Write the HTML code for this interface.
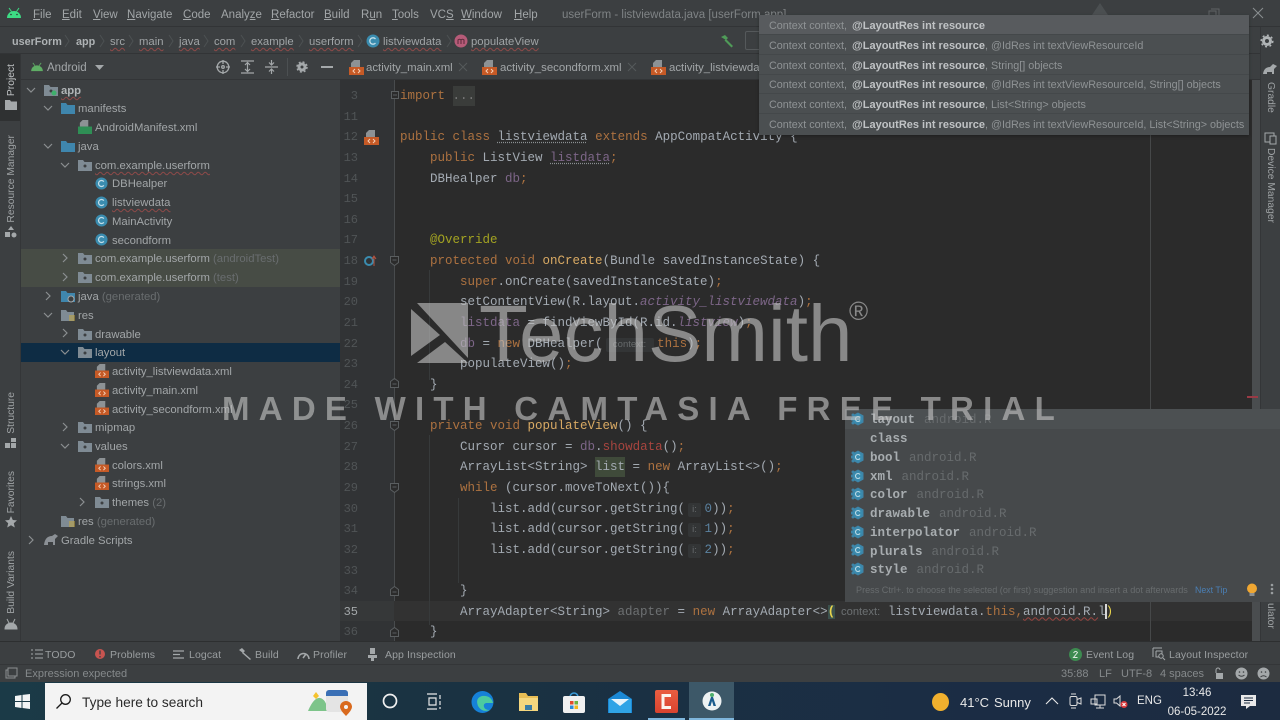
<!DOCTYPE html>
<html><head><meta charset="utf-8"><style>
html,body{margin:0;padding:0;width:1280px;height:720px;overflow:hidden;background:#3c3f41}
*{box-sizing:border-box}
body{position:relative;font-family:"Liberation Sans",sans-serif;font-size:11.5px;color:#a4a8aa}
.a{position:absolute}
.t{position:absolute;white-space:pre;line-height:16px;height:16px}
.m span{position:absolute;top:7px;white-space:pre;font-size:11.5px;line-height:16px;color:#a2a6a8}
.m u{text-underline-offset:1px}
.n span,.n b{position:absolute;top:34px;line-height:16px;white-space:pre;color:#a0a4a6;font-size:11.3px}
.n b{color:#aeb2b4;font-size:10.8px}
.wv{text-decoration:underline wavy #8f4a49 1px;text-underline-offset:2px}
.r{position:absolute;height:16px;line-height:16px;margin-top:1px;white-space:pre;font-size:11.3px;color:#a2a6a8}
.r i{font-style:normal;color:#696d6f}
.ln{position:absolute;left:335px;width:23px;text-align:right;font:12px/16px "Liberation Mono",monospace;color:#505456}
.c{position:absolute;white-space:pre;font:12.5px/16px "Liberation Mono",monospace;color:#a3aab2}
.k{color:#ad7240}.y{color:#d9aa64}.p{color:#7d6688}.g{color:#a3a322}.num{color:#5b82a0}
.h{display:inline-block;font:9.5px/14px "Liberation Sans",sans-serif;color:#666a6b;background:#333536;border-radius:2px;text-align:center;margin:0 3.5px 0 3px}
.v{position:absolute;writing-mode:vertical-rl;white-space:pre;font-size:10.3px;line-height:14px;color:#a0a4a6}
.vl{transform:rotate(180deg)}
.pr{position:absolute;left:0;width:490px;height:20px;line-height:20px;padding-top:1px;padding-left:10px;white-space:pre;font-size:10.8px;color:#8f9395;border-bottom:1px solid #44484a}
.pr b{color:#c0c3c5;font-weight:bold;font-size:11px;margin-left:5px}
.cr{position:absolute;left:25px;font:12.5px/16px "Liberation Mono",monospace;margin-top:1px;white-space:pre;color:#a8adb0;font-weight:bold}
.cr i{font-style:normal;font-weight:normal;color:#676b6d;margin-left:3px}
.b{position:absolute;top:647px;font-size:10.5px;line-height:16px;white-space:pre;color:#9a9ea0;letter-spacing:.1px}
.s{position:absolute;top:666px;font-size:11px;line-height:16px;white-space:pre;color:#85898b}
svg{position:absolute;overflow:visible}
</style></head><body>
<svg width="0" height="0" style="left:0;top:0"><defs>
<symbol id="fold" viewBox="0 0 14 12"><path d="M0 1h5l1.500 2H14v9H0z" fill="#7f8b94"/><circle cx="7" cy="7" r="1.500" fill="#3c3f41"/></symbol>
<symbol id="bfold" viewBox="0 0 14 12"><path d="M0 1h5l1.500 2H14v9H0z" fill="#3f86ad"/></symbol>
<symbol id="cl" viewBox="0 0 14 14"><circle cx="7" cy="7" r="6.500" fill="#3a8caf"/><path d="M9.500 5A3.200 3.200 0 1 0 9.500 9" fill="none" stroke="#c5dfe9" stroke-width="1.300"/></symbol>
<symbol id="xm" viewBox="0 0 15 15"><path d="M5 0h6v7H2V3z" fill="#8d9295"/><rect y="7" width="15" height="8" fill="#c65a26"/><path d="M6 9l-2 2 2 2M9 9l2 2-2 2" fill="none" stroke="#f3d0b8" stroke-width="1"/></symbol>
<symbol id="chd" viewBox="0 0 10 10"><path d="M1 3l4 4 4-4" fill="none" stroke="#8b8f91" stroke-width="1.200"/></symbol>
<symbol id="chr" viewBox="0 0 10 10"><path d="M3 1l4 4-4 4" fill="none" stroke="#8b8f91" stroke-width="1.200"/></symbol>
<symbol id="rc" viewBox="0 0 14 14"><path d="M7 .5L12.500 3.500v7L7 13.500 1.500 10.500v-7z" fill="#3d85a8"/><circle cx="7" cy="7" r="4.500" fill="#3a8caf"/><path d="M9 5.500A2.500 2.500 0 1 0 9 8.500" fill="none" stroke="#b9d8e4" stroke-width="1.100"/><circle cx="2" cy="3" r="1.500" fill="#3d85a8"/><circle cx="2" cy="11" r="1.500" fill="#3d85a8"/><circle cx="1" cy="7" r="1.500" fill="#3d85a8"/></symbol>
</defs></svg>

<!-- chrome backgrounds -->
<div class="a" style="left:0;top:0;width:1280px;height:27px;background:#3c3f41;border-bottom:1px solid #323436"></div>
<div class="a" style="left:0;top:27px;width:1280px;height:27px;background:#3c3f41;border-bottom:1px solid #323436"></div>
<div class="a" style="left:20px;top:54px;width:320px;height:588px;background:#3c3f41"></div>
<div class="a" style="left:20px;top:79px;width:320px;height:1px;background:#333537"></div>
<div class="a" style="left:0;top:54px;width:21px;height:588px;background:#3c3f41;border-right:1px solid #343638"></div>
<div class="a" style="left:0;top:54px;width:20px;height:67px;background:#2f3132"></div>
<div class="a" style="left:340px;top:54px;width:920px;height:26px;background:#3c3f41;border-bottom:1px solid #323436"></div>
<!-- editor -->
<div class="a" style="left:340px;top:80px;width:912px;height:562px;background:#2b2b2b"></div>
<div class="a" style="left:340px;top:80px;width:54px;height:562px;background:#313335"></div>
<div class="a" style="left:394px;top:80px;width:1px;height:562px;background:#484b4d"></div>
<div class="a" style="left:394px;top:601px;width:858px;height:20px;background:#323232"></div>
<div class="a" style="left:340px;top:601px;width:54px;height:20px;background:#363839"></div>
<div class="a" style="left:1150px;top:135px;width:1px;height:507px;background:#464849"></div>
<div class="a" style="left:1252px;top:80px;width:8px;height:562px;background:#4a4d4f"></div>
<div class="a" style="left:1247px;top:396px;width:11px;height:1.500px;background:#9a3a45"></div>
<div class="a" style="left:1260px;top:27px;width:20px;height:615px;background:#3c3f41;border-left:1px solid #343638"></div>
<div class="a" style="left:0;top:641px;width:1280px;height:1px;background:#2d2f30"></div>
<div class="a" style="left:0;top:642px;width:1280px;height:23px;background:#3c3f41;border-bottom:1px solid #343638"></div>
<div class="a" style="left:0;top:665px;width:1280px;height:17px;background:#3c3f41"></div>

<!-- menu -->
<svg style="left:6px;top:7px" width="16" height="12" viewBox="0 0 16 12"><path d="M1 11A7 7 0 0 1 15 11z" fill="#3ddc84"/><path d="M3 1l2.500 3.500M13 1l-2.500 3.500" stroke="#3ddc84" stroke-width="1"/><circle cx="5" cy="7.500" r=".8" fill="#2f3132"/><circle cx="11" cy="7.500" r=".8" fill="#2f3132"/></svg>
<div class="m">
<span style="left:33px"><u>F</u>ile</span><span style="left:62px"><u>E</u>dit</span><span style="left:93px"><u>V</u>iew</span><span style="left:127px"><u>N</u>avigate</span><span style="left:183px"><u>C</u>ode</span><span style="left:221px">Analy<u>z</u>e</span><span style="left:271px"><u>R</u>efactor</span><span style="left:324px"><u>B</u>uild</span><span style="left:361px">R<u>u</u>n</span><span style="left:392px"><u>T</u>ools</span><span style="left:430px">VC<u>S</u></span><span style="left:461px"><u>W</u>indow</span><span style="left:514px"><u>H</u>elp</span><span style="left:562px;color:#7f8385">userForm - listviewdata.java [userForm.app]</span>
</div>
<svg style="left:1208px;top:8px" width="12" height="10"><path d="M3 1h8v6M1 3h7v6H1z" fill="none" stroke="#5f6365"/></svg>
<svg style="left:1253px;top:8px" width="10" height="10"><path d="M0 0l10 10M10 0L0 10" stroke="#8b8f91" stroke-width="1"/></svg>

<!-- nav -->
<div class="n">
<b style="left:12px;font-weight:bold">userForm</b><b style="left:76px;font-weight:bold">app</b>
<span class="wv" style="left:110px">src</span><span class="wv" style="left:139px">main</span><span class="wv" style="left:179px">java</span><span class="wv" style="left:214px">com</span><span class="wv" style="left:251px">example</span><span class="wv" style="left:309px">userform</span><span class="wv" style="left:383px">listviewdata</span><span class="wv" style="left:471px">populateView</span>
</div>
<svg style="left:0;top:0" width="560" height="54" fill="none" stroke="#4d5153"><path d="M65 35l4 6-4 6M100 35l4 6-4 6M129 35l4 6-4 6M169 35l4 6-4 6M204 35l4 6-4 6M241 35l4 6-4 6M299 35l4 6-4 6M358 35l4 6-4 6M447 35l4 6-4 6"/></svg>
<svg style="left:366px;top:34px" width="14" height="14"><use href="#cl" width="14" height="14"/></svg>
<svg style="left:454px;top:34px" width="14" height="14"><circle cx="7" cy="7" r="6.500" fill="#b65b78"/><path d="M4 10V5.500M7 10V5.500M10 10V5.500M4 6q1.500-1.500 3 0q1.500-1.500 3 0" fill="none" stroke="#5a2a3a" stroke-width="1"/></svg>
<svg style="left:720px;top:34px" width="14" height="14"><path d="M1 3l4-2 3 3-2 2zM6 5l7 7-1.500 1.500-7-7z" fill="#4f9b58"/></svg>
<div class="a" style="left:745px;top:31px;width:20px;height:19px;border:1px solid #55595b;border-radius:2px"></div>
<svg style="left:1260px;top:34px" width="14" height="14"><circle cx="7" cy="7" r="3.500" fill="none" stroke="#b0b4b6" stroke-width="3"/><circle cx="7" cy="7" r="5.800" fill="none" stroke="#b0b4b6" stroke-width="1.500" stroke-dasharray="2 2.500"/></svg>

<!-- project panel header -->
<svg style="left:30px;top:62px" width="14" height="10" viewBox="0 0 16 12"><path d="M1 11A7 7 0 0 1 15 11z" fill="#5fad65"/><path d="M3 1l2.500 3.500M13 1l-2.500 3.500" stroke="#5fad65"/></svg>
<div class="t" style="left:47px;top:60px;font-size:11.5px">Android</div>
<svg style="left:95px;top:65px" width="9" height="5"><path d="M0 0h9L4.500 5z" fill="#a4a8aa"/></svg>
<svg style="left:216px;top:60px" width="14" height="14" fill="none" stroke="#a4a8aa" stroke-width="1.300"><circle cx="7" cy="7" r="5.800"/><circle cx="7" cy="7" r="1.300"/><path d="M7 0v4M7 10v4M0 7h4M10 7h4"/></svg>
<svg style="left:241px;top:60px" width="13" height="14" fill="none" stroke="#a4a8aa" stroke-width="1.200"><path d="M0 1h13M0 13h13M6.500 3v8M4 5l2.500-2.500L9 5M4 9l2.500 2.500L9 9"/></svg>
<svg style="left:265px;top:60px" width="13" height="14" fill="none" stroke="#a4a8aa" stroke-width="1.200"><path d="M0 7h13M6.500 0v5M6.500 14V9M4 2.500L6.500 5 9 2.500M4 11.500L6.500 9 9 11.500"/></svg>
<div class="a" style="left:287px;top:58px;width:1px;height:18px;background:#4c5052"></div>
<svg style="left:296px;top:61px" width="12" height="12"><circle cx="6" cy="6" r="3" fill="none" stroke="#a4a8aa" stroke-width="3"/><circle cx="6" cy="6" r="5" fill="none" stroke="#a4a8aa" stroke-width="1.500" stroke-dasharray="2 2"/></svg>
<div class="a" style="left:321px;top:66px;width:12px;height:1.500px;background:#a4a8aa"></div>

<!-- vertical labels left -->
<div class="v vl" style="left:5px;top:64px;color:#c0c3c5">Project</div>
<svg style="left:5px;top:100px" width="12" height="10"><path d="M0 0h5l1 1.500h6V10H0z" fill="#a4a8aa"/></svg>
<div class="v vl" style="left:5px;top:135px">Resource Manager</div>
<svg style="left:5px;top:226px" width="12" height="12"><path d="M6 0l3 4H3z M0 6h5v5H0z" fill="#a4a8aa"/><circle cx="9" cy="9" r="2.500" fill="#a4a8aa"/></svg>
<div class="v vl" style="left:5px;top:392px">Structure</div>
<svg style="left:5px;top:438px" width="12" height="10"><path d="M6 0h5v4H6zM0 5h5v5H0zM6 5h5v5H6z" fill="#a4a8aa"/></svg>
<div class="v vl" style="left:5px;top:471px">Favorites</div>
<svg style="left:5px;top:516px" width="12" height="12"><path d="M6 0l1.800 4 4.200.400-3.200 2.800 1 4.300L6 9.200 2.200 11.500l1-4.300L0 4.400 4.200 4z" fill="#a4a8aa"/></svg>
<div class="v vl" style="left:5px;top:551px">Build Variants</div>
<svg style="left:5px;top:619px" width="12" height="10"><path d="M0 10A6 6 0 0 1 12 10zM2 0l2 4M10 0L8 4" fill="#a4a8aa" stroke="#a4a8aa"/></svg>

<!-- tree highlights -->
<div class="a" style="left:21px;top:249px;width:319px;height:38px;background:#474c45"></div>
<div class="a" style="left:21px;top:343px;width:319px;height:19px;background:#0e2c44"></div>

<!-- tree -->
<svg style="left:26px;top:85px" width="10" height="10"><use href="#chd" width="10" height="10"/></svg>
<svg style="left:44px;top:84px" width="14" height="12"><use href="#fold" width="14" height="12"/></svg><svg style="left:51px;top:90px" width="6" height="6"><circle cx="3" cy="3" r="2.500" fill="#3fb06c"/></svg>
<div class="r" style="left:61px;top:82px;font-weight:bold;color:#b0b4b6"><span class="wv">app</span></div>
<svg style="left:43px;top:103px" width="10" height="10"><use href="#chd" width="10" height="10"/></svg>
<svg style="left:61px;top:102px" width="14" height="12"><use href="#bfold" width="14" height="12"/></svg>
<div class="r" style="left:78px;top:100px">manifests</div>
<svg style="left:78px;top:120px" width="14" height="14" viewBox="0 0 15 15"><path d="M5 0h6v7H2V3z" fill="#8d9295"/><rect y="7" width="15" height="8" fill="#2f8f55"/></svg>
<div class="r" style="left:95px;top:119px">AndroidManifest.xml</div>
<svg style="left:43px;top:141px" width="10" height="10"><use href="#chd" width="10" height="10"/></svg>
<svg style="left:61px;top:140px" width="14" height="12"><use href="#bfold" width="14" height="12"/></svg>
<div class="r" style="left:78px;top:138px">java</div>
<svg style="left:60px;top:160px" width="10" height="10"><use href="#chd" width="10" height="10"/></svg>
<svg style="left:78px;top:159px" width="14" height="12"><use href="#fold" width="14" height="12"/></svg>
<div class="r" style="left:95px;top:157px"><span class="wv">com.example.userform</span></div>
<svg style="left:95px;top:177px" width="13" height="13"><use href="#cl" width="13" height="13"/></svg>
<div class="r" style="left:112px;top:175px">DBHealper</div>
<svg style="left:95px;top:196px" width="13" height="13"><use href="#cl" width="13" height="13"/></svg>
<div class="r" style="left:112px;top:194px"><span class="wv">listviewdata</span></div>
<svg style="left:95px;top:214px" width="13" height="13"><use href="#cl" width="13" height="13"/></svg>
<div class="r" style="left:112px;top:213px">MainActivity</div>
<svg style="left:95px;top:233px" width="13" height="13"><use href="#cl" width="13" height="13"/></svg>
<div class="r" style="left:112px;top:232px">secondform</div>
<svg style="left:60px;top:253px" width="10" height="10"><use href="#chr" width="10" height="10"/></svg>
<svg style="left:78px;top:252px" width="14" height="12"><use href="#fold" width="14" height="12"/></svg>
<div class="r" style="left:95px;top:250px">com.example.userform <i>(androidTest)</i></div>
<svg style="left:60px;top:272px" width="10" height="10"><use href="#chr" width="10" height="10"/></svg>
<svg style="left:78px;top:271px" width="14" height="12"><use href="#fold" width="14" height="12"/></svg>
<div class="r" style="left:95px;top:269px">com.example.userform <i>(test)</i></div>
<svg style="left:43px;top:291px" width="10" height="10"><use href="#chr" width="10" height="10"/></svg>
<svg style="left:61px;top:290px" width="14" height="12"><use href="#bfold" width="14" height="12"/></svg><svg style="left:67px;top:295px" width="8" height="8"><circle cx="4" cy="4" r="3" fill="#3c3f41" stroke="#a4a8aa"/></svg>
<div class="r" style="left:78px;top:288px">java <i>(generated)</i></div>
<svg style="left:43px;top:310px" width="10" height="10"><use href="#chd" width="10" height="10"/></svg>
<svg style="left:61px;top:309px" width="14" height="12"><path d="M0 1h5l1.500 2H13v9H0z" fill="#7f8b94"/><path d="M8 7h6M8 9h6M8 11h6" stroke="#c9a93a"/></svg>
<div class="r" style="left:78px;top:307px">res</div>
<svg style="left:60px;top:328px" width="10" height="10"><use href="#chr" width="10" height="10"/></svg>
<svg style="left:78px;top:328px" width="14" height="12"><use href="#fold" width="14" height="12"/></svg>
<div class="r" style="left:95px;top:326px">drawable</div>
<svg style="left:60px;top:347px" width="10" height="10"><use href="#chd" width="10" height="10"/></svg>
<svg style="left:78px;top:346px" width="14" height="12"><use href="#fold" width="14" height="12"/></svg>
<div class="r" style="left:95px;top:344px">layout</div>
<svg style="left:95px;top:364px" width="14" height="14"><use href="#xm" width="14" height="14"/></svg>
<div class="r" style="left:112px;top:363px">activity_listviewdata.xml</div>
<svg style="left:95px;top:383px" width="14" height="14"><use href="#xm" width="14" height="14"/></svg>
<div class="r" style="left:112px;top:382px">activity_main.xml</div>
<svg style="left:95px;top:401px" width="14" height="14"><use href="#xm" width="14" height="14"/></svg>
<div class="r" style="left:112px;top:401px">activity_secondform.xml</div>
<svg style="left:60px;top:422px" width="10" height="10"><use href="#chr" width="10" height="10"/></svg>
<svg style="left:78px;top:421px" width="14" height="12"><use href="#fold" width="14" height="12"/></svg>
<div class="r" style="left:95px;top:419px">mipmap</div>
<svg style="left:60px;top:441px" width="10" height="10"><use href="#chd" width="10" height="10"/></svg>
<svg style="left:78px;top:440px" width="14" height="12"><use href="#fold" width="14" height="12"/></svg>
<div class="r" style="left:95px;top:438px">values</div>
<svg style="left:95px;top:458px" width="14" height="14"><use href="#xm" width="14" height="14"/></svg>
<div class="r" style="left:112px;top:457px">colors.xml</div>
<svg style="left:95px;top:476px" width="14" height="14"><use href="#xm" width="14" height="14"/></svg>
<div class="r" style="left:112px;top:475px">strings.xml</div>
<svg style="left:77px;top:497px" width="10" height="10"><use href="#chr" width="10" height="10"/></svg>
<svg style="left:95px;top:496px" width="14" height="12"><use href="#fold" width="14" height="12"/></svg>
<div class="r" style="left:112px;top:494px">themes <i>(2)</i></div>
<svg style="left:61px;top:515px" width="14" height="12"><path d="M0 1h5l1.500 2H13v9H0z" fill="#7f8b94"/><path d="M8 7h6M8 9h6M8 11h6" stroke="#c9a93a"/></svg>
<div class="r" style="left:78px;top:513px">res <i>(generated)</i></div>
<svg style="left:26px;top:535px" width="10" height="10"><use href="#chr" width="10" height="10"/></svg>
<svg style="left:44px;top:534px" width="14" height="11"><path d="M0 11q1-9 8-9l3-2 3 2-3 3v6H9V8H4v3z" fill="#8b9095"/></svg>
<div class="r" style="left:61px;top:532px">Gradle Scripts</div>

<!-- tabs -->
<svg style="left:349px;top:60px" width="15" height="15"><use href="#xm" width="15" height="15"/></svg>
<div class="t" style="left:366px;top:60px;font-size:11.4px;color:#a2a6a8">activity_main.xml</div>
<svg style="left:459px;top:63px" width="8" height="8"><path d="M0 0l8 8M8 0L0 8" stroke="#55595b"/></svg>
<svg style="left:482px;top:60px" width="15" height="15"><use href="#xm" width="15" height="15"/></svg>
<div class="t" style="left:500px;top:60px;font-size:11.4px;color:#a2a6a8">activity_secondform.xml</div>
<svg style="left:628px;top:63px" width="8" height="8"><path d="M0 0l8 8M8 0L0 8" stroke="#55595b"/></svg>
<svg style="left:651px;top:60px" width="15" height="15"><use href="#xm" width="15" height="15"/></svg>
<div class="t" style="left:669px;top:60px;font-size:11.4px;color:#a2a6a8">activity_listviewdata.xml</div>

<!-- line numbers -->
<div class="ln" style="top:88px">3</div><div class="ln" style="top:108.500px">11</div><div class="ln" style="top:129px">12</div><div class="ln" style="top:150px">13</div><div class="ln" style="top:170.500px">14</div><div class="ln" style="top:191px">15</div><div class="ln" style="top:211.500px">16</div><div class="ln" style="top:232px">17</div><div class="ln" style="top:253px">18</div><div class="ln" style="top:273.500px">19</div><div class="ln" style="top:294px">20</div><div class="ln" style="top:315px">21</div><div class="ln" style="top:335.500px">22</div><div class="ln" style="top:356px">23</div><div class="ln" style="top:376.500px">24</div><div class="ln" style="top:397px">25</div><div class="ln" style="top:418px">26</div><div class="ln" style="top:438.500px">27</div><div class="ln" style="top:459px">28</div><div class="ln" style="top:480px">29</div><div class="ln" style="top:500.500px">30</div><div class="ln" style="top:521px">31</div><div class="ln" style="top:541.500px">32</div><div class="ln" style="top:562.500px">33</div><div class="ln" style="top:583px">34</div><div class="ln" style="top:603.500px;color:#a4a8aa">35</div><div class="ln" style="top:624px">36</div>

<!-- gutter marks -->
<svg style="left:364px;top:130px" width="15" height="15"><use href="#xm" width="15" height="15"/></svg>
<svg style="left:364px;top:255px" width="12" height="12"><circle cx="5" cy="6" r="4" fill="none" stroke="#3a8caf" stroke-width="2"/><path d="M10 11V2M8 4l2-3 2 3" stroke="#b5533f" fill="none"/></svg>
<svg style="left:391px;top:91px" width="9" height="9" fill="#2b2b2b" stroke="#5a5e60"><rect x=".5" y=".5" width="7" height="7"/><path d="M2 4h4"/></svg>
<svg style="left:390px;top:256px" width="9" height="10" fill="#2b2b2b" stroke="#5a5e60"><path d="M.5.500h8v6l-4 3-4-3zM2.500 4h4"/></svg>
<svg style="left:390px;top:378px" width="9" height="10" fill="#2b2b2b" stroke="#5a5e60"><path d="M.5 9.500h8v-6l-4-3-4 3zM2.500 6h4"/></svg>
<svg style="left:390px;top:421px" width="9" height="10" fill="#2b2b2b" stroke="#5a5e60"><path d="M.5.500h8v6l-4 3-4-3zM2.500 4h4"/></svg>
<svg style="left:390px;top:483px" width="9" height="10" fill="#2b2b2b" stroke="#5a5e60"><path d="M.5.500h8v6l-4 3-4-3zM2.500 4h4"/></svg>
<svg style="left:390px;top:586px" width="9" height="10" fill="#2b2b2b" stroke="#5a5e60"><path d="M.5 9.500h8v-6l-4-3-4 3zM2.500 6h4"/></svg>
<svg style="left:390px;top:627px" width="9" height="10" fill="#2b2b2b" stroke="#5a5e60"><path d="M.5 9.500h8v-6l-4-3-4 3zM2.500 6h4"/></svg>
<div class="a" style="left:429px;top:270px;width:1px;height:110px;background:#373a3b"></div>
<div class="a" style="left:429px;top:435px;width:1px;height:190px;background:#373a3b"></div>
<div class="a" style="left:458px;top:498px;width:1px;height:85px;background:#373a3b"></div>

<!-- code -->
<div class="c" style="left:400px;top:88px"><span class="k">import</span> <span style="background:#3a3c3a;color:#777;padding:3px 0">...</span></div>
<div class="c" style="left:400px;top:129px"><span class="k">public class</span> <span style="text-decoration:underline dotted #8a8f92;text-underline-offset:2px">listviewdata</span> <span class="k">extends</span> AppCompatActivity {</div>
<div class="c" style="left:430px;top:150px"><span class="k">public</span> ListView <span class="p" style="text-decoration:underline dotted #8a8f92;text-underline-offset:2px">listdata</span><span class="k">;</span></div>
<div class="c" style="left:430px;top:170.500px">DBHealper <span class="p">db</span><span class="k">;</span></div>
<div class="c g" style="left:430px;top:232px;color:#a3a322">@Override</div>
<div class="c" style="left:430px;top:253px"><span class="k">protected void</span> <span class="y">onCreate</span>(Bundle savedInstanceState) {</div>
<div class="c" style="left:460px;top:273.500px"><span class="k">super</span>.onCreate(savedInstanceState)<span class="k">;</span></div>
<div class="c" style="left:460px;top:294px">setContentView(R.layout.<i class="p">activity_listviewdata</i>)<span class="k">;</span></div>
<div class="c" style="left:460px;top:315px"><span class="p">listdata</span> = findViewById(R.id.<i class="p">listview</i>)<span class="k">;</span></div>
<div class="c" style="left:460px;top:335.500px"><span class="p">db</span> = <span class="k">new</span> DBHealper(<span class="h" style="width:48px">context:</span><span class="k">this</span>)<span class="k">;</span></div>
<div class="c" style="left:460px;top:356px">populateView()<span class="k">;</span></div>
<div class="c" style="left:430px;top:376.500px">}</div>
<div class="c" style="left:430px;top:418px"><span class="k">private void</span> <span class="y">populateView</span>() {</div>
<div class="c" style="left:460px;top:438.500px">Cursor cursor = <span class="p">db</span>.<span style="color:#a8453f">showdata</span>()<span class="k">;</span></div>
<div class="c" style="left:460px;top:459px">ArrayList&lt;String&gt; <span style="background:#3f4a3a;padding:3px 0">list</span> = <span class="k">new</span> ArrayList&lt;&gt;()<span class="k">;</span></div>
<div class="c" style="left:460px;top:480px"><span class="k">while</span> (cursor.moveToNext()){</div>
<div class="c" style="left:490px;top:500.500px">list.add(cursor.getString(<span class="h" style="width:13px">i:</span><span class="num">0</span>))<span class="k">;</span></div>
<div class="c" style="left:490px;top:521px">list.add(cursor.getString(<span class="h" style="width:13px">i:</span><span class="num">1</span>))<span class="k">;</span></div>
<div class="c" style="left:490px;top:541.500px">list.add(cursor.getString(<span class="h" style="width:13px">i:</span><span class="num">2</span>))<span class="k">;</span></div>
<div class="c" style="left:460px;top:583px">}</div>
<div class="c" style="left:460px;top:603.500px">ArrayAdapter&lt;String&gt; <span style="color:#6d7072">adapter</span> = <span class="k">new</span> ArrayAdapter&lt;&gt;<span style="color:#e8d44d;background:#3b514d;font-weight:bold">(</span></div>
<div class="t" style="left:841px;top:603.500px;font-size:11.2px;color:#6c7072">context:</div>
<div class="c" style="left:888px;top:603.500px">listviewdata.<span class="k">this,</span><span style="text-decoration:underline wavy #9a4540 1px;text-underline-offset:2px">android.R.</span>l<span style="color:#e8d44d">)</span></div>
<div class="a" style="left:1105px;top:604px;width:1.500px;height:15px;background:#d8d8d8"></div>
<div class="c" style="left:430px;top:624px">}</div>

<!-- right strip -->
<svg style="left:1263px;top:64px" width="14" height="10"><path d="M0 10q1-7 7-7l3-3 4 2-3 3v5H9V8H4v2z" fill="#a4a8aa"/></svg>
<div class="v" style="left:1263px;top:82px">Gradle</div>
<svg style="left:1264px;top:132px" width="13" height="13" fill="none" stroke="#a4a8aa"><rect x="1" y="1" width="9" height="9"/><rect x="6" y="4" width="6" height="8" fill="#3c3f41"/></svg>
<div class="v" style="left:1263px;top:148px">Device Manager</div>
<div class="v" style="left:1263px;top:603px">ulator</div>

<!-- parameter popup -->
<svg style="left:1092px;top:3px" width="16" height="12"><path d="M0 12L8 0l8 12z" fill="#4b4f51"/></svg>
<div class="a" style="left:759px;top:15px;width:490px;height:120px;background:#4b4f51;box-shadow:0 1px 3px rgba(0,0,0,.3)">
<div class="pr" style="top:0;background:#585b5e">Context context,<b>@LayoutRes int resource</b></div>
<div class="pr" style="top:20px">Context context,<b>@LayoutRes int resource</b>, @IdRes int textViewResourceId</div>
<div class="pr" style="top:40px">Context context,<b>@LayoutRes int resource</b>, String[] objects</div>
<div class="pr" style="top:59px">Context context,<b>@LayoutRes int resource</b>, @IdRes int textViewResourceId, String[] objects</div>
<div class="pr" style="top:79px">Context context,<b>@LayoutRes int resource</b>, List&lt;String&gt; objects</div>
<div class="pr" style="top:99px;border:0">Context context,<b>@LayoutRes int resource</b>, @IdRes int textViewResourceId, List&lt;String&gt; objects</div>
</div>

<!-- completion popup -->
<div class="a" style="left:845px;top:409px;width:435px;height:193px;background:#46494b">
<div class="a" style="left:0;top:0;width:435px;height:20px;background:#4c5052"></div>
<div class="cr" style="top:2px">layout<i style="margin-left:9px">android.R</i></div>
<div class="cr" style="top:21px">class</div>
<div class="cr" style="top:40px">bool<i style="margin-left:9px">android.R</i></div>
<div class="cr" style="top:58.500px">xml<i style="margin-left:9px">android.R</i></div>
<div class="cr" style="top:77px">color<i style="margin-left:9px">android.R</i></div>
<div class="cr" style="top:96px">drawable<i style="margin-left:9px">android.R</i></div>
<div class="cr" style="top:115px">interpolator<i style="margin-left:9px">android.R</i></div>
<div class="cr" style="top:133.500px">plurals<i style="margin-left:9px">android.R</i></div>
<div class="cr" style="top:152px">style<i style="margin-left:9px">android.R</i></div>
<svg style="left:6px;top:3px" width="14" height="14"><use href="#rc" width="14" height="14"/></svg>
<svg style="left:6px;top:41px" width="14" height="14"><use href="#rc" width="14" height="14"/></svg>
<svg style="left:6px;top:60px" width="14" height="14"><use href="#rc" width="14" height="14"/></svg>
<svg style="left:6px;top:78px" width="14" height="14"><use href="#rc" width="14" height="14"/></svg>
<svg style="left:6px;top:97px" width="14" height="14"><use href="#rc" width="14" height="14"/></svg>
<svg style="left:6px;top:116px" width="14" height="14"><use href="#rc" width="14" height="14"/></svg>
<svg style="left:6px;top:134px" width="14" height="14"><use href="#rc" width="14" height="14"/></svg>
<svg style="left:6px;top:153px" width="14" height="14"><use href="#rc" width="14" height="14"/></svg>
<div class="t" style="left:11px;top:173px;font-size:9.1px;color:#686c6e">Press Ctrl+. to choose the selected (or first) suggestion and insert a dot afterwards</div>
<div class="t" style="left:350px;top:173px;font-size:8.800px;color:#4a7fb5">Next Tip</div>
<svg style="left:401px;top:174px" width="12" height="16"><circle cx="6" cy="5.500" r="5" fill="#f0a732"/><rect x="3.500" y="10" width="5" height="3" fill="#8c8f91"/></svg>
<svg style="left:425px;top:174px" width="4" height="12"><circle cx="2" cy="2" r="1.300" fill="#9a9ea0"/><circle cx="2" cy="6" r="1.300" fill="#9a9ea0"/><circle cx="2" cy="10" r="1.300" fill="#9a9ea0"/></svg>
</div>

<!-- watermark -->
<svg style="left:0;top:0;opacity:.62" width="1280" height="720"><path d="M417 303h51v55zM411 309v47l29-21zM417 363l28-21 23 21z" fill="#c0c0c0"/></svg>
<div class="t" style="left:479px;top:289px;height:90px;line-height:90px;font-size:80px;color:rgba(195,195,195,.62)">TechSmith</div>
<div class="t" style="left:849px;top:298px;height:26px;line-height:26px;font-size:26px;color:rgba(195,195,195,.62)">®</div>
<div class="t" style="left:222px;top:390px;height:38px;line-height:38px;font-size:33px;font-weight:bold;letter-spacing:9.250px;color:rgba(195,195,195,.62)">MADE WITH CAMTASIA FREE TRIAL</div>

<!-- bottom tool bar -->
<svg style="left:31px;top:649px" width="12" height="10" stroke="#a4a8aa"><path d="M0 1h2M4 1h8M0 5h2M4 5h8M0 9h2M4 9h8"/></svg>
<div class="b" style="left:45px">TODO</div>
<svg style="left:95px;top:648px" width="10" height="12"><circle cx="5" cy="6" r="5" fill="#c75450"/><path d="M5 2.500v4M5 8v1.500" stroke="#3c3f41" stroke-width="1.300"/></svg>
<div class="b" style="left:110px">Problems</div>
<svg style="left:173px;top:650px" width="12" height="9" stroke="#a4a8aa" stroke-width="1.300"><path d="M0 1h11M0 4.500h7M0 8h11"/></svg>
<div class="b" style="left:189px">Logcat</div>
<svg style="left:239px;top:648px" width="12" height="12"><path d="M0 2l3-2 3 3-2 2zM4 4l8 7-1 1-8-7z" fill="#a4a8aa"/></svg>
<div class="b" style="left:255px">Build</div>
<svg style="left:297px;top:650px" width="13" height="9" fill="none" stroke="#a4a8aa" stroke-width="1.500"><path d="M1 9A5.500 5.500 0 0 1 12 9M6 8l3-4"/></svg>
<div class="b" style="left:313px">Profiler</div>
<svg style="left:367px;top:648px" width="11" height="13"><path d="M3 0h5v6H3zM1 7h9v3H7v3H4v-3H1z" fill="#a4a8aa"/></svg>
<div class="b" style="left:385px">App Inspection</div>
<svg style="left:1069px;top:648px" width="13" height="13"><circle cx="6.500" cy="6.500" r="6.500" fill="#3d8b50"/><path d="M4.500 5q2-3 4-.5L4.500 9.500h4" fill="none" stroke="#dce9df"/></svg>
<div class="b" style="left:1086px">Event Log</div>
<svg style="left:1153px;top:648px" width="12" height="12" fill="none" stroke="#a4a8aa"><path d="M0 0h9M0 0v9M3 3h6v3M3 3v6h3"/><circle cx="8" cy="8" r="2.200"/><path d="M10 10l2 2"/></svg>
<div class="b" style="left:1169px">Layout Inspector</div>

<!-- status -->
<svg style="left:5px;top:667px" width="13" height="12" fill="none" stroke="#8b8f91"><path d="M3 1h9v8H3zM3 3H1v8h9V9"/></svg>
<div class="s" style="left:25px">Expression expected</div>
<div class="s" style="left:1061px">35:88</div><div class="s" style="left:1099px">LF</div><div class="s" style="left:1121px">UTF-8</div><div class="s" style="left:1160px">4 spaces</div>
<svg style="left:1213px;top:667px" width="10" height="12"><path d="M3 6V3a2 2 0 0 1 4 0" fill="none" stroke="#a4a8aa"/><rect x="3" y="6" width="7" height="6" fill="#a4a8aa"/></svg>
<svg style="left:1235px;top:667px" width="13" height="13"><circle cx="6.500" cy="6.500" r="6" fill="#a4a8aa"/><path d="M3.500 8q3 2.500 6 0" stroke="#3c3f41" fill="none"/><circle cx="4.500" cy="5" r=".8" fill="#3c3f41"/><circle cx="8.500" cy="5" r=".8" fill="#3c3f41"/></svg>
<svg style="left:1257px;top:667px" width="13" height="13"><circle cx="6.500" cy="6.500" r="6" fill="#a4a8aa"/><path d="M3.500 10q3-2.500 6 0" stroke="#3c3f41" fill="none"/><circle cx="4.500" cy="5" r=".8" fill="#3c3f41"/><circle cx="8.500" cy="5" r=".8" fill="#3c3f41"/></svg>

<!-- taskbar -->
<div class="a" style="left:0;top:682px;width:1280px;height:38px;background:linear-gradient(90deg,#1b3a47 0,#1a3342 400px,#1b2c44 1000px,#1c2b40 1280px)"></div>
<svg style="left:15px;top:694px" width="15" height="15" fill="#f2f4f5"><path d="M0 2l6.500-1v6H0zM7.500.900L15 0v7H7.500zM0 8h6.500v6L0 13zM7.500 8H15v7l-7.500-1z"/></svg>
<div class="a" style="left:45px;top:683px;width:322px;height:37px;background:#f3f3f3"></div>
<svg style="left:56px;top:694px" width="15" height="15" fill="none" stroke="#1a1a1a" stroke-width="1.300"><circle cx="9.500" cy="5.500" r="4.800"/><path d="M6 9L.5 14.500"/></svg>
<div class="t" style="left:82px;top:693px;height:19px;line-height:19px;font-size:13.700px;color:#2a2a2a">Type here to search</div>
<svg style="left:306px;top:688px" width="47" height="30"><path d="M2 23Q8 9 14 10t8 13z" fill="#7dc48a"/><path d="M7 8l3-4 3 4-3 3z" fill="#f5c22d"/><rect x="20" y="2" width="22" height="22" rx="3" fill="#e4e4e4"/><path d="M20 5a3 3 0 0 1 3-3h16a3 3 0 0 1 3 3v3H20z" fill="#3a6fb5"/><path d="M34 19a6 6 0 0 1 12 0q0 3-6 9-6-6-6-9z" fill="#d96a1e"/><circle cx="40" cy="19" r="2" fill="#f3f3f3"/></svg>
<svg style="left:381px;top:692px" width="18" height="18"><circle cx="9" cy="9" r="6.500" fill="none" stroke="#f0f0f0" stroke-width="1.700"/></svg>
<svg style="left:427px;top:693px" width="15" height="17" fill="none" stroke="#e8e8e8" stroke-width="1.200"><path d="M0 1h10M0 16h10M2 5h7v7H2zM13 2v4M13 8v4M13 14v2"/></svg>
<svg style="left:471px;top:690px" width="23" height="24"><circle cx="11.500" cy="12" r="11" fill="#1681d8"/><path d="M22 13Q20 5 11 6 4 8 7 16q4 7 12 4-5 0-6-3-1-3 2-4z" fill="#4ccaa0"/></svg>
<svg style="left:518px;top:693px" width="21" height="18"><path d="M1 0h7l2 3h10v15H1z" fill="#e8be55"/><path d="M1 5h19v13H1z" fill="#f5d77e"/><rect x="7" y="12" width="7" height="5" fill="#3a7ca5"/></svg>
<svg style="left:563px;top:692px" width="22" height="21"><path d="M7 5a4 4 0 0 1 8 0" fill="none" stroke="#3a9bd8" stroke-width="1.500"/><rect y="4" width="22" height="17" rx="2" fill="#f0f0f0"/><path d="M7 9h3.500v3.500H7z" fill="#e34b2c"/><path d="M11.500 9H15v3.500h-3.500z" fill="#6cb33f"/><path d="M7 13.500h3.500V17H7z" fill="#2e8bd8"/><path d="M11.500 13.500H15V17h-3.500z" fill="#f5b71b"/></svg>
<svg style="left:608px;top:691px" width="24" height="22"><path d="M12 0l12 8v14H0V8z" fill="#1b88d4"/><path d="M1 8h22v14H1z" fill="#30a4e6"/><path d="M3 8l9 7 9-7z" fill="#e8f4fb"/></svg>
<div class="a" style="left:655px;top:690px;width:23px;height:23px;border-radius:2px;background:linear-gradient(#ea5e41,#d9432f)"></div>
<svg style="left:655px;top:690px" width="23" height="23"><path d="M16 5.500H8v12h8" fill="none" stroke="#fbf4ee" stroke-width="3"/></svg>
<div class="a" style="left:689px;top:682px;width:45px;height:38px;background:#3d5868"></div>
<svg style="left:702px;top:691px" width="20" height="20"><circle cx="10" cy="10" r="9.500" fill="#eef2f2"/><path d="M6 15l3-9h2l3 9h-2.500L10 10l-1.500 5z" fill="#1c5c8c"/><circle cx="10" cy="4" r="2" fill="#4faf6c"/></svg>
<div class="a" style="left:648px;top:718px;width:37px;height:2px;background:#7fb6dc"></div>
<div class="a" style="left:689px;top:718px;width:45px;height:2px;background:#7fb6dc"></div>
<svg style="left:932px;top:693px" width="17" height="18"><ellipse cx="8.500" cy="9" rx="8.500" ry="9" fill="#f1b02e"/></svg>
<div class="t" style="left:960px;top:693px;height:19px;line-height:19px;font-size:13px;color:#e8e8e8">41°C</div>
<div class="t" style="left:994px;top:693px;height:19px;line-height:19px;font-size:13px;color:#e8e8e8">Sunny</div>
<svg style="left:1046px;top:697px" width="12" height="8" fill="none" stroke="#e8e8e8" stroke-width="1.100"><path d="M0 7l6-6 6 6"/></svg>
<svg style="left:1069px;top:693px" width="14" height="16" fill="none" stroke="#dcdcdc"><rect x="1" y="3.500" width="7" height="9" rx="1.500"/><path d="M8 6.500l4-1.500v6l-4-1.500M2 1h5M2 15h5"/></svg>
<svg style="left:1090px;top:694px" width="16" height="15" fill="none" stroke="#dcdcdc"><path d="M5 1h10v10H5zM1 5h6v5H1zM10 11v3M6 14h8"/></svg>
<svg style="left:1113px;top:694px" width="16" height="14"><path d="M1 5h2.500L7 2v10L3.500 9H1z" fill="none" stroke="#dcdcdc"/><circle cx="11" cy="10.500" r="3.500" fill="#d8393c"/><path d="M9.500 9l3 3M12.500 9l-3 3" stroke="#fff"/></svg>
<div class="t" style="left:1137px;top:692px;font-size:11.500px;height:18px;line-height:18px;color:#e8e8e8">ENG</div>
<div class="t" style="left:1157px;top:685px;width:80px;text-align:center;font-size:11.500px;color:#e8e8e8">13:46</div>
<div class="t" style="left:1157px;top:704px;width:80px;text-align:center;font-size:11.500px;color:#e8e8e8">06-05-2022</div>
<svg style="left:1241px;top:695px" width="16" height="15"><path d="M0 0h15v11H9l-4 3v-3H0z" fill="#e8e8e8"/><path d="M3 3h9M3 5.500h9M3 8h6" stroke="#1c2b40"/></svg>
</body></html>
